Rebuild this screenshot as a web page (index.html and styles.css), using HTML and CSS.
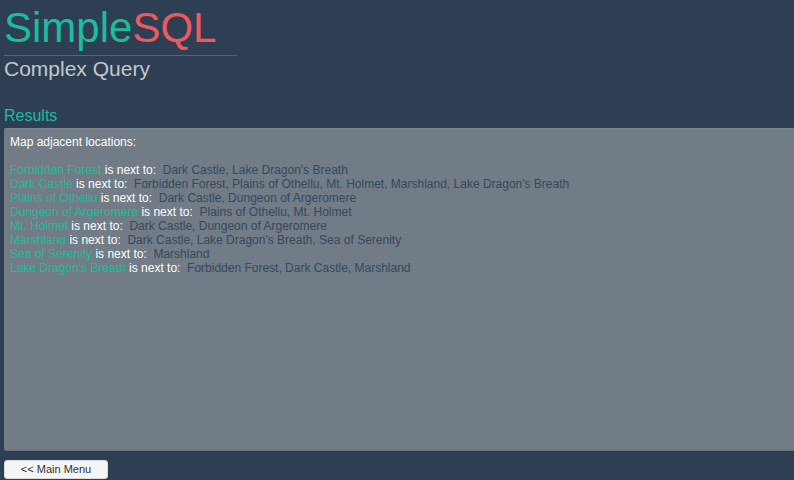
FILE: index.html
```html
<!DOCTYPE html>
<html>
<head>
<meta charset="utf-8">
<link rel="stylesheet" href="styles.css">
</head>
<body>
<div class="page">
  <header class="header">
    <h1 class="brand"><span class="simple">Simple</span><span class="sql">SQL</span></h1>
    <div class="rule"></div>
    <h2 class="subtitle">Complex Query</h2>
  </header>
  <h3 class="section">Results</h3>
  <div class="panel">
    <div class="intro">Map adjacent locations:</div>
    <div class="rows">
      <div class="row"><span class="loc">Forbidden Forest</span> <span class="lbl">is next to:</span> &nbsp;<span class="adj">Dark Castle, Lake Dragon's Breath</span></div>
      <div class="row"><span class="loc">Dark Castle</span> <span class="lbl">is next to:</span> &nbsp;<span class="adj">Forbidden Forest, Plains of Othellu, Mt. Holmet, Marshland, Lake Dragon's Breath</span></div>
      <div class="row"><span class="loc">Plains of Othellu</span> <span class="lbl">is next to:</span> &nbsp;<span class="adj">Dark Castle, Dungeon of Argeromere</span></div>
      <div class="row"><span class="loc">Dungeon of Argeromere</span> <span class="lbl">is next to:</span> &nbsp;<span class="adj">Plains of Othellu, Mt. Holmet</span></div>
      <div class="row"><span class="loc">Mt. Holmet</span> <span class="lbl">is next to:</span> &nbsp;<span class="adj">Dark Castle, Dungeon of Argeromere</span></div>
      <div class="row"><span class="loc">Marshland</span> <span class="lbl">is next to:</span> &nbsp;<span class="adj">Dark Castle, Lake Dragon's Breath, Sea of Serenity</span></div>
      <div class="row"><span class="loc">Sea of Serenity</span> <span class="lbl">is next to:</span> &nbsp;<span class="adj">Marshland</span></div>
      <div class="row"><span class="loc">Lake Dragon's Breath</span> <span class="lbl">is next to:</span> &nbsp;<span class="adj">Forbidden Forest, Dark Castle, Marshland</span></div>
    </div>
  </div>
  <button class="menu-btn">&lt;&lt; Main Menu</button>
</div>
</body>
</html>
```
FILE: styles.css
```css
html, body {
  margin: 0;
  padding: 0;
  background: #2e3f53;
  overflow: hidden;
}
body {
  font-family: "Liberation Sans", Arial, sans-serif;
  width: 794px;
  height: 480px;
}
.page {
  padding: 0 4px;
  display: flex;
  flex-direction: column;
  align-items: flex-start;
}
.header {
  display: flex;
  flex-direction: column;
  width: 233px;
}
.brand {
  margin: 0;
  font-weight: normal;
  font-size: 42px;
  line-height: 48px;
  margin-top: 4px;
}
.simple { color: #1dbc9b; }
.sql { color: #ec5a61; }
.rule {
  height: 1px;
  background: #56667a;
  margin-top: 3px;
}
.subtitle {
  margin: 0;
  font-weight: normal;
  font-size: 21px;
  line-height: 24px;
  color: #c3c7cc;
  margin-top: 1px;
}
.section {
  margin: 0;
  margin-top: 26px;
  font-weight: normal;
  font-size: 16px;
  line-height: 18px;
  color: #1dbc9b;
}
.panel {
  margin-top: 3px;
  width: 800px;
  height: 323px;
  background: #717c86;
  box-sizing: border-box;
  padding: 6px 6px;
  border-top: 1px solid #7a858f;
  border-bottom: 1px solid #65717b;
  font-size: 12px;
  line-height: 14px;
  border-radius: 2px 0 0 2px;
}
.intro { color: #ffffff; }
.rows { margin-top: 14px; }
.row { white-space: nowrap; }
.loc { color: #1dbc9b; }
.lbl { color: #ffffff; }
.adj { color: #34495e; }
.menu-btn {
  margin-top: 9px;
  width: 104px;
  height: 19px;
  background: #f5f5f5;
  border: 1px solid #d9d9d9;
  border-radius: 3px;
  font-family: "Liberation Sans", Arial, sans-serif;
  font-size: 11px;
  color: #333;
  padding: 0;
  line-height: 17px;
}
```
